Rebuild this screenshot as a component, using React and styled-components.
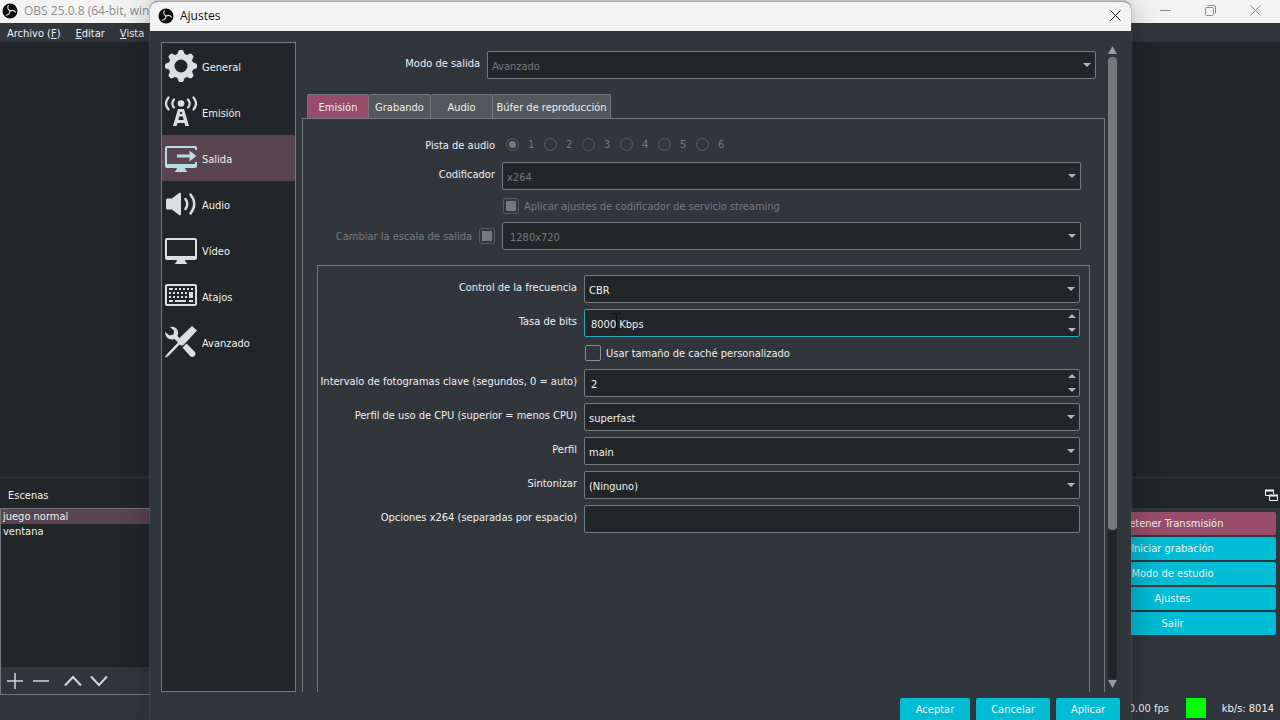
import React from 'react';
import styled, { createGlobalStyle, css } from 'styled-components';

const c = {
  window: '#31363d',
  base: '#232629',
  line: '#76797c',
  text: '#eff0f1',
  muted: '#76797c',
  accent: '#00bcd4',
  rose: '#974d6a',
  selected: '#5a4450',
  title: '#f3f3f3',
};

const GlobalStyle = createGlobalStyle`
  *, *::before, *::after { box-sizing: border-box; }
  html, body { margin: 0; background: ${c.window}; overflow: hidden; }
  body, button, input, select {
    font-family: "DejaVu Sans Condensed", "DejaVu Sans", sans-serif;
    font-size: 11px;
    color: ${c.text};
  }
  button, input, select { margin: 0; padding: 0; border: 0; background: none; outline: 0; }
  ul { list-style: none; margin: 0; padding: 0; }
`;

/* Main window */
const Desktop = styled.div`
  position: relative;
  display: flex;
  flex-direction: column;
  height: 100vh;
  overflow: hidden;
  background: ${c.window};
`;
const MainTitle = styled.header`
  display: flex;
  align-items: center;
  gap: 6px;
  height: 23px;
  flex: none;
  padding: 0 19px 2px 2px;
  background: ${c.title};
  color: #8b8b8b;
  font-family: "Open Sans", "Noto Sans", sans-serif;
  font-size: 12px;
  white-space: nowrap;
`;
const WindowButtons = styled.div`
  display: flex;
  gap: 33px;
  margin-left: auto;
`;
const PlainButton = styled.button`
  display: grid;
  place-items: center;
  width: ${(p) => p.$w || 12}px;
  height: ${(p) => p.$h || p.$w || 12}px;
  flex: none;
`;
const MenuBar = styled.nav`
  display: flex;
  align-items: center;
  gap: 15px;
  height: 19px;
  flex: none;
  padding: 1px 0 0 7px;
`;
const MenuLink = styled.a`
  color: ${c.text};
  text-decoration: none;
  white-space: nowrap;
`;
const Preview = styled.main`
  flex: 1;
  background: ${c.base};
`;
const Docks = styled.section`
  display: flex;
  justify-content: space-between;
  height: 219px;
  flex: none;
  border-top: 3px solid #2b2f33;
`;
const Dock = styled.section`
  display: flex;
  flex-direction: column;
  width: ${(p) => p.$w}px;
`;
const DockTitle = styled.h2`
  display: flex;
  align-items: center;
  justify-content: space-between;
  height: 29px;
  flex: none;
  margin: 0;
  padding: 3px 2px 0 8px;
  background: ${c.base};
  font-size: 11px;
  font-weight: normal;
`;
const SceneBox = styled.div`
  display: flex;
  flex-direction: column;
  flex: 1;
  border: 1px solid ${c.line};
`;
const SceneList = styled.ul`
  flex: 1;
  background: ${c.base};
`;
const Scene = styled.li`
  height: 15px;
  padding-left: 2px;
  line-height: 16px;
  background: ${(p) => (p.$active ? c.selected : 'none')};
`;
const SceneTools = styled.div`
  display: flex;
  align-items: center;
  gap: 14px;
  height: 27px;
  padding-left: 5px;
`;
const ToolGroup = styled.div`
  display: flex;
  gap: 8px;
`;
const Controls = styled.div`
  display: flex;
  flex-direction: column;
  gap: 2px;
  padding: 4px 4px 0 0;
`;
const PushButton = styled.button`
  height: 23px;
  flex: none;
  border-radius: 2px;
  background: ${(p) => (p.$rose ? c.rose : c.accent)};
  width: ${(p) => (p.$w ? p.$w + 'px' : 'auto')};
`;
const StatusBar = styled.footer`
  display: flex;
  align-items: center;
  justify-content: flex-end;
  height: 25px;
  flex: none;
  padding: 1px 6px 0 0;
`;
const Signal = styled.span`
  width: 20px;
  height: 20px;
  margin: 0 16px 0 17px;
  background: #00ff00;
`;

/* Settings dialog */
const Dialog = styled.section`
  position: absolute;
  inset: 1px 149px 0 150px;
  display: flex;
  flex-direction: column;
  overflow: hidden;
  border-top: 1px solid #a5a5a5;
  border-radius: 8px 8px 0 0;
  background: ${c.window};
  box-shadow: 0 0 2px rgba(120, 125, 130, 0.9), 0 4px 32px rgba(0, 0, 0, 0.3);
`;
const DialogTitle = styled.header`
  display: flex;
  align-items: center;
  gap: 6px;
  height: 29px;
  flex: none;
  padding: 0 8px 2px;
  background: ${c.title};
  color: #111;
  font-family: "Open Sans", "Noto Sans", sans-serif;
  font-size: 12px;
`;
const DialogHeading = styled.h1`
  flex: 1;
  margin: 0;
  font-size: 12px;
  font-weight: normal;
`;
const DialogBody = styled.div`
  display: flex;
  flex: 1;
  min-height: 0;
  padding: 11px 14px 0 11px;
`;
const Sidebar = styled.nav`
  width: 135px;
  flex: none;
  margin-right: 6px;
  border: 1px solid ${c.line};
  background: ${c.base};
`;
const SideLink = styled.a`
  display: flex;
  align-items: center;
  gap: 5px;
  height: 46px;
  padding: 0 3px;
  color: ${(p) => (p.$active ? '#b5dfe2' : '#dcdedf')};
  background: ${(p) => (p.$active ? c.selected : 'none')};
  text-decoration: none;
`;
const SideText = styled.span`
  padding-top: 2px;
  color: ${c.text};
`;
const Page = styled.div`
  display: flex;
  flex-direction: column;
  flex: 1;
  min-width: 0;
  overflow: hidden;
  padding-top: 9px;
`;
const ModeRow = styled.div`
  display: grid;
  grid-template-columns: 179px minmax(0, 1fr);
  gap: 6px;
  padding-right: 9px;
`;
const Tabs = styled.div`
  display: flex;
  margin: 15px 0 0 5px;
`;
const Tab = styled.button`
  width: ${(p) => p.$w}px;
  height: 24px;
  padding-top: 2px;
  border: 1px solid ${c.line};
  border-bottom: 0;
  border-left-width: ${(p) => (p.$active ? 1 : 0)}px;
  border-radius: 2px 2px 0 0;
  background: ${(p) => (p.$active ? c.rose : '#54575b')};
  white-space: nowrap;
`;
const Pane = styled.div`
  flex: 1;
  display: flex;
  flex-direction: column;
  padding: 15px 14px 0;
  border: 1px solid ${c.line};
  border-bottom: 0;
`;
const Form = styled.div`
  display: grid;
  grid-template-columns: ${(p) => p.$label}px minmax(0, 1fr);
  gap: 6px;
  padding-right: 9px;
`;
const Group = styled.div`
  flex: 1;
  margin-top: 15px;
  padding: 9px 0 0 8px;
  border: 1px solid ${c.line};
  border-bottom: 0;
`;
const Label = styled.label`
  display: flex;
  justify-content: flex-end;
  align-items: center;
  height: ${(p) => p.$h || 24}px;
  padding-right: 1px;
  white-space: nowrap;
`;
const LabelCheck = styled.div`
  display: flex;
  justify-content: flex-end;
  align-items: center;
  gap: 7px;
  padding-right: 1px;
  color: ${c.muted};
  white-space: nowrap;
`;
const CheckRow = styled.div`
  grid-column: 2;
  display: flex;
  align-items: center;
  gap: 5px;
  height: 20px;
  padding-left: 1px;
  color: ${(p) => (p.$off ? c.muted : c.text)};
`;
const Check = styled.input.attrs({ type: 'checkbox' })`
  appearance: none;
  display: grid;
  place-items: center;
  width: 16px;
  height: 16px;
  flex: none;
  border: 1px solid ${(p) => (p.disabled ? '#54585d' : '#8b8e91')};
  border-radius: 2px;
  &:checked::before {
    content: '';
    width: 10px;
    height: 10px;
    background: ${c.muted};
  }
`;
const RadioRow = styled.fieldset`
  display: flex;
  align-items: center;
  height: 22px;
  margin: 0;
  padding: 0 0 2px 4px;
  border: 0;
  color: ${c.muted};
`;
const RadioLabel = styled.label`
  display: flex;
  align-items: center;
  gap: 9px;
  width: 38px;
`;
const Radio = styled.input.attrs({ type: 'radio' })`
  appearance: none;
  display: grid;
  place-items: center;
  width: 13px;
  height: 13px;
  border: 1px solid #565a5f;
  border-radius: 50%;
  &:checked::before {
    content: '';
    width: 7px;
    height: 7px;
    border-radius: 50%;
    background: ${c.muted};
  }
`;
const FieldWrap = styled.div`
  position: relative;
  display: flex;
  height: 28px;
`;
const fieldBox = css`
  width: 100%;
  height: 28px;
  border: 1px solid ${(p) => (p.$focus ? '#2aa7b3' : c.line)};
  border-radius: 2px;
  background: ${c.base};
  padding: 2px 24px 0 ${(p) => p.$pad || 4}px;
`;
const SelectBox = styled.select`
  appearance: none;
  ${fieldBox}
  &:disabled { color: ${c.muted}; opacity: 1; }
`;
const TextBox = styled.input.attrs({ type: 'text' })`
  ${fieldBox}
`;
const DropArrow = styled.svg`
  position: absolute;
  right: 5px;
  top: 12px;
  pointer-events: none;
`;
const Spinner = styled.div`
  position: absolute;
  inset: 0 2px 0 auto;
  display: flex;
  flex-direction: column;
  justify-content: space-between;
  padding: 3px 0;
`;
const Beam = styled.svg`
  position: absolute;
  left: 28px;
  top: 4px;
  pointer-events: none;
`;
const Scroll = styled.div`
  display: flex;
  flex-direction: column;
  align-items: center;
  width: 9px;
  flex: none;
  margin-left: 3px;
  padding: 4px 0;
`;
const Track = styled.div`
  flex: 1;
  width: 9px;
  margin: 3px 0 1px;
  border-radius: 4px;
  background: ${c.base};
`;
const Thumb = styled.div`
  height: 76%;
  border-radius: 4px;
  background: ${c.line};
`;
const DialogFooter = styled.footer`
  display: flex;
  justify-content: flex-end;
  gap: 6px;
  height: 28px;
  flex: none;
  padding: 6px 11px 0 0;
  overflow: hidden;
`;

const Tri = ({ up, w = 8, h = 4, fill = '#b4b6b8' }) => (
  <svg width={w} height={h} viewBox="0 0 8 4" preserveAspectRatio="none">
    <path d={up ? 'M0 4L4 0L8 4Z' : 'M0 0L4 4L8 0Z'} fill={fill} />
  </svg>
);

const ObsLogo = () => (
  <svg width="16" height="16" viewBox="0 0 32 32">
    <circle cx="16" cy="16" r="15" fill="#0b0b0b" />
    <g fill="none" stroke="#dcdcdc" strokeWidth="2.2" strokeLinecap="round">
      {[0, 120, 240].map((a) => (
        <path key={a} transform={`rotate(${a} 16 16)`} d="M16 16Q9.500 12 12.500 5" />
      ))}
    </g>
  </svg>
);

const Close = ({ color, size = 11 }) => (
  <svg width={size} height={size} viewBox="0 0 11 11" stroke={color} fill="none">
    <path d="M.5 .5L10.500 10.500M10.500 .5L.5 10.500" />
  </svg>
);

const Icon = ({ children }) => (
  <svg width="32" height="32" viewBox="0 0 32 32" fill="currentColor">
    {children}
  </svg>
);

const icons = {
  General: (
    <>
      <circle cx="16" cy="16" r="9.500" fill="none" stroke="currentColor" strokeWidth="6" />
      {[0, 45, 90, 135, 180, 225, 270, 315].map((a) => (
        <path key={a} transform={`rotate(${a} 16 16)`} d="M12 5L13.500 1Q14 0 15 0H17Q18 0 18.500 1L20 5Z" />
      ))}
    </>
  ),
  'Emisión': (
    <>
      <circle cx="16" cy="7.500" r="3.300" />
      <g fill="none" stroke="currentColor" strokeWidth="2.200" strokeLinecap="round">
        <path d="M3.500 1.500Q-1.500 7.500 3.500 13.500M28.500 1.500Q33.500 7.500 28.500 13.500" />
        <path d="M9 3.500Q5.500 7.500 9 11.500M23 3.500Q26.500 7.500 23 11.500" />
      </g>
      <path fillRule="evenodd" d="M13 13H19L24 30H20.300L19.500 27H12.500L11.700 30H8ZM15.200 16L14.700 18H17.300L16.800 16ZM14.200 20.500L13.400 24H18.600L17.800 20.500Z" />
    </>
  ),
  Salida: (
    <>
      <path d="M2 4H30Q32 4 32 6V8H30V6H2V22H30V20H32V24Q32 26 30 26H20Q20 28 22.500 30H9.500Q12 28 12 26H2Q0 26 0 24V6Q0 4 2 4Z" />
      <path d="M12 12.500H24.500V8.500L31.500 14L24.500 19.500V15.500H12Z" />
    </>
  ),
  Audio: (
    <>
      <path d="M1 12Q1 10.500 2.500 10.500H7L14 5Q16 4 16 6V26Q16 28 14 27L7 21.500H2.500Q1 21.500 1 20Z" />
      <g fill="none" stroke="currentColor" strokeWidth="2.400" strokeLinecap="round">
        <path d="M20.500 11Q24 16 20.500 21M25.500 6.500Q33 16 25.500 25.500" />
      </g>
    </>
  ),
  'Vídeo': (
    <path fillRule="evenodd" d="M2 4H30Q32 4 32 6V24Q32 26 30 26H20Q20 28 22.500 30H9.500Q12 28 12 26H2Q0 26 0 24V6Q0 4 2 4ZM2 6V22H30V6Z" />
  ),
  Atajos: (
    <>
      <path fillRule="evenodd" d="M2 4H30Q32 4 32 6V24Q32 26 30 26H2Q0 26 0 24V6Q0 4 2 4ZM2 6V24H30V6Z" />
      <g fill="none" stroke="currentColor" strokeWidth="2">
        <path d="M4 9H8M10 9H12M14 9H16M18 9H20M22 9H24M26 9H28" />
        <path d="M4 13H6M8 13H10M12 13H14M16 13H18M20 13H22M4 17H6M8 17H10M12 17H14M16 17H18M20 17H22" />
        <path d="M4 21H8M10 21H21M24 21H28" />
        <path d="M26 12V18" strokeWidth="4" />
      </g>
    </>
  ),
  Avanzado: (
    <>
      <path d="M5 1Q10 0 12.500 4Q14 7 12.500 10L15 12.500L12 15.500L9.500 13Q5 14.500 2 11.500Q0 9 0 6L4.500 9.500L8.500 8.500L9 4.500Z" />
      <path d="M17.500 21.500L21.500 17.500L29.500 25.500Q31.500 28 29.500 30Q27.500 32 25 30Z" />
      <path d="M27 0L32 4.500L19 18.500Q16.500 20.500 14.500 18.500L4 29.500L1 31.500L0 31L2.500 27.500L12.500 17Q11.500 15 13.500 13Z" />
    </>
  ),
};

const Select = ({ id, value, disabled, pad, label }) => (
  <FieldWrap>
    <SelectBox id={id} aria-label={label} disabled={disabled} defaultValue={value} $pad={pad}>
      <option>{value}</option>
    </SelectBox>
    <DropArrow width="8" height="4" viewBox="0 0 8 4">
      <path d="M0 0L4 4L8 0Z" fill="#b4b6b8" />
    </DropArrow>
  </FieldWrap>
);

const Spin = ({ id, value, focus }) => (
  <FieldWrap>
    <TextBox id={id} defaultValue={value} $focus={focus} $pad={6} />
    {focus && (
      <Beam width="9" height="17" viewBox="0 0 9 17" fill="none" stroke="#0c0d0e">
        <path d="M1 .5H3.500L4.500 1.500L5.500 .5H8M4.500 1.500V15.500M1 16.500H3.500L4.500 15.500L5.500 16.500H8" />
      </Beam>
    )}
    <Spinner>
      <PlainButton $w={12} $h={8} aria-label="Aumentar"><Tri up /></PlainButton>
      <PlainButton $w={12} $h={8} aria-label="Reducir"><Tri /></PlainButton>
    </Spinner>
  </FieldWrap>
);

const encoder = [
  ['rate', 'Control de la frecuencia', 'CBR', 'select'],
  ['bits', 'Tasa de bits', '8000 Kbps', 'focus'],
  ['cache', 'Usar tamaño de caché personalizado', null, 'check'],
  ['key', 'Intervalo de fotogramas clave (segundos, 0 = auto)', '2', 'spin'],
  ['cpu', 'Perfil de uso de CPU (superior = menos CPU)', 'superfast', 'select'],
  ['profile', 'Perfil', 'main', 'select'],
  ['tune', 'Sintonizar', '(Ninguno)', 'select'],
  ['opts', 'Opciones x264 (separadas por espacio)', '', 'text'],
];

const EncoderRow = ({ row: [id, label, value, kind] }) => {
  if (kind === 'check') {
    return (
      <CheckRow>
        <Check id={id} />
        <label htmlFor={id}>{label}</label>
      </CheckRow>
    );
  }
  return (
    <>
      <Label htmlFor={id}>{label}</Label>
      {kind === 'select' && <Select id={id} value={value} />}
      {(kind === 'spin' || kind === 'focus') && <Spin id={id} value={value} focus={kind === 'focus'} />}
      {kind === 'text' && <TextBox id={id} defaultValue={value} />}
    </>
  );
};

const toolStroke = { width: 18, height: 18, viewBox: '0 0 18 18', fill: 'none', stroke: '#d3d6d8' };

export default function App() {
  return (
    <Desktop>
      <GlobalStyle />
      <MainTitle>
        <ObsLogo />
        <span>OBS 25.0.8 (64-bit, windows)</span>
        <WindowButtons>
          <PlainButton aria-label="Minimizar">
            <svg width="11" height="11" stroke="#8b8b8b"><path d="M0 5.500H11" /></svg>
          </PlainButton>
          <PlainButton aria-label="Restaurar">
            <svg width="11" height="11" fill="none" stroke="#8b8b8b">
              <rect x=".5" y="2.500" width="8" height="8" rx="1" />
              <path d="M2.500 .5H9Q10.500 .5 10.500 2V8.500" />
            </svg>
          </PlainButton>
          <PlainButton aria-label="Cerrar"><Close color="#8b8b8b" /></PlainButton>
        </WindowButtons>
      </MainTitle>
      <MenuBar>
        <MenuLink href="#archivo">Archivo (<u>F</u>)</MenuLink>
        <MenuLink href="#editar"><u>E</u>ditar</MenuLink>
        <MenuLink href="#vista"><u>V</u>ista</MenuLink>
      </MenuBar>
      <Preview />
      <Docks>
        <Dock $w={211}>
          <DockTitle>Escenas</DockTitle>
          <SceneBox>
            <SceneList>
              <Scene $active>juego normal</Scene>
              <Scene>ventana</Scene>
            </SceneList>
            <SceneTools>
              <ToolGroup>
                <PlainButton $w={18} aria-label="Agregar"><svg {...toolStroke} strokeWidth="1.500"><path d="M1 9H17M9 1V17" /></svg></PlainButton>
                <PlainButton $w={18} aria-label="Quitar"><svg {...toolStroke} strokeWidth="1.500"><path d="M1 9H17" /></svg></PlainButton>
              </ToolGroup>
              <ToolGroup>
                <PlainButton $w={18} aria-label="Subir"><svg {...toolStroke} strokeWidth="2"><path d="M1 13.500L9 5L17 13.500" /></svg></PlainButton>
                <PlainButton $w={18} aria-label="Bajar"><svg {...toolStroke} strokeWidth="2"><path d="M1 4.500L9 13L17 4.500" /></svg></PlainButton>
              </ToolGroup>
            </SceneTools>
          </SceneBox>
        </Dock>
        <Dock $w={211}>
          <DockTitle>
            <span />
            <PlainButton $w={13} aria-label="Desacoplar">
              <svg width="13" height="13" fill="none" stroke="#eff0f1">
                <path d="M4 6.500H.5V1.500H8.500V5M4.500 6.500V11.500H12.500V6.500" />
                <path d="M0 1.500H9M4 6.500H13" strokeWidth="2" />
              </svg>
            </PlainButton>
          </DockTitle>
          <Controls>
            <PushButton $rose>Detener Transmisión</PushButton>
            <PushButton>Iniciar grabación</PushButton>
            <PushButton>Modo de estudio</PushButton>
            <PushButton>Ajustes</PushButton>
            <PushButton>Salir</PushButton>
          </Controls>
        </Dock>
      </Docks>
      <StatusBar>
        <span>0.00 fps</span>
        <Signal />
        <span>kb/s: 8014</span>
      </StatusBar>

      <Dialog role="dialog" aria-labelledby="dialog-title">
        <DialogTitle>
          <ObsLogo />
          <DialogHeading id="dialog-title">Ajustes</DialogHeading>
          <PlainButton $w={15} aria-label="Cerrar"><Close color="#111" /></PlainButton>
        </DialogTitle>
        <DialogBody>
          <Sidebar>
            {Object.entries(icons).map(([name, art]) => (
              <SideLink key={name} href={`#${name}`} $active={name === 'Salida'}>
                <Icon>{art}</Icon>
                <SideText>{name}</SideText>
              </SideLink>
            ))}
          </Sidebar>
          <Page>
            <ModeRow>
              <Label htmlFor="mode">Modo de salida</Label>
              <Select id="mode" value="Avanzado" disabled />
            </ModeRow>
            <Tabs role="tablist">
              <Tab role="tab" $w={62} $active>Emisión</Tab>
              <Tab role="tab" $w={62}>Grabando</Tab>
              <Tab role="tab" $w={62}>Audio</Tab>
              <Tab role="tab" $w={118}>Búfer de reproducción</Tab>
            </Tabs>
            <Pane>
              <Form $label={179}>
                <Label as="span" $h={22}>Pista de audio</Label>
                <RadioRow aria-label="Pista de audio">
                  {[1, 2, 3, 4, 5, 6].map((n) => (
                    <RadioLabel key={n}>
                      <Radio name="track" defaultChecked={n === 1} disabled />
                      {n}
                    </RadioLabel>
                  ))}
                </RadioRow>
                <Label htmlFor="encoder">Codificador</Label>
                <Select id="encoder" value="x264" disabled />
                <CheckRow $off>
                  <Check id="enforce" defaultChecked disabled />
                  <label htmlFor="enforce">Aplicar ajustes de codificador de servicio streaming</label>
                </CheckRow>
                <LabelCheck>
                  <label htmlFor="rescale">Cambiar la escala de salida</label>
                  <Check id="rescale" defaultChecked disabled />
                </LabelCheck>
                <Select id="scale" label="Escala de salida" value="1280x720" disabled pad={7} />
              </Form>
              <Group>
                <Form $label={252}>
                  {encoder.map((row) => <EncoderRow key={row[0]} row={row} />)}
                </Form>
              </Group>
            </Pane>
          </Page>
          <Scroll>
            <Tri up w={9} h={8} fill="#9a9c9e" />
            <Track><Thumb /></Track>
            <Tri w={9} h={8} fill="#9a9c9e" />
          </Scroll>
        </DialogBody>
        <DialogFooter>
          <PushButton $w={70}>Aceptar</PushButton>
          <PushButton $w={74}>Cancelar</PushButton>
          <PushButton $w={64}>Aplicar</PushButton>
        </DialogFooter>
      </Dialog>
    </Desktop>
  );
}
